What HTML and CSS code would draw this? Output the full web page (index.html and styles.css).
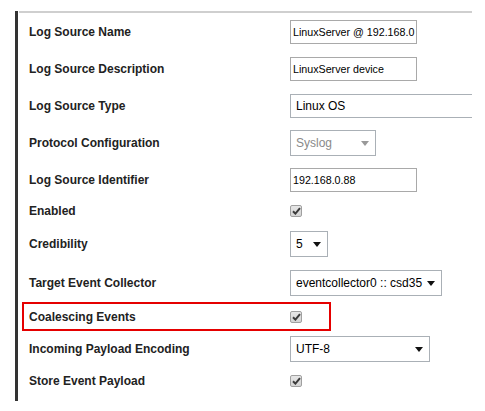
FILE: index.html
```html
<!DOCTYPE html>
<html>
<head>
<meta charset="utf-8">
<link rel="stylesheet" href="styles.css">
</head>
<body>
<div class="panel">
  <div class="content">
    <div class="row r37">
      <div class="label">Log Source Name</div>
      <div class="field text w127">LinuxServer @ 192.168.0</div>
    </div>
    <div class="row r37">
      <div class="label">Log Source Description</div>
      <div class="field text w127">LinuxServer device</div>
    </div>
    <div class="row r37">
      <div class="label">Log Source Type</div>
      <div class="field sel wide">Linux OS</div>
    </div>
    <div class="row r37">
      <div class="label">Protocol Configuration</div>
      <div class="field sel disabled w86">Syslog<span class="arrow"></span></div>
    </div>
    <div class="row r37">
      <div class="label">Log Source Identifier</div>
      <div class="field text w127">192.168.0.88</div>
    </div>
    <div class="row r26">
      <div class="label">Enabled</div>
      <span class="check"><svg width="9" height="8" viewBox="0 0 9 8"><path d="M1 4.2 L3.4 6.6 L8 1.2" fill="none" stroke="#3a3a3a" stroke-width="2"/></svg></span>
    </div>
    <div class="row r40">
      <div class="label">Credibility</div>
      <div class="field sel w38">5<span class="arrow"></span></div>
    </div>
    <div class="row r38">
      <div class="label">Target Event Collector</div>
      <div class="field sel w152">eventcollector0 :: csd35<span class="arrow"></span></div>
    </div>
    <div class="row r29 highlight">
      <div class="label">Coalescing Events</div>
      <span class="check"><svg width="9" height="8" viewBox="0 0 9 8"><path d="M1 4.2 L3.4 6.6 L8 1.2" fill="none" stroke="#3a3a3a" stroke-width="2"/></svg></span>
    </div>
    <div class="row r36">
      <div class="label">Incoming Payload Encoding</div>
      <div class="field sel w140">UTF-8<span class="arrow"></span></div>
    </div>
    <div class="row r28">
      <div class="label">Store Event Payload</div>
      <span class="check"><svg width="9" height="8" viewBox="0 0 9 8"><path d="M1 4.2 L3.4 6.6 L8 1.2" fill="none" stroke="#3a3a3a" stroke-width="2"/></svg></span>
    </div>
  </div>
</div>
</body>
</html>
```

FILE: styles.css
```css
html, body {
  margin: 0;
  padding: 0;
  background: #fff;
}
body {
  font-family: "Liberation Sans", Arial, sans-serif;
  color: #222;
}
.panel {
  margin: 11px 0 0 15px;
  width: 457px;
  height: 390px;
  box-sizing: border-box;
  border-left: 3px solid #333;
  overflow: hidden;
}
.content {
  margin-left: 1px;
  border-top: 2px solid #cfcfcf;
  height: 100%;
}
.row {
  display: flex;
  align-items: center;
  margin-left: 3px;
  padding-left: 7px;
  box-sizing: border-box;
}
.r26 { height: 26px; }
.r28 { height: 28px; }
.r29 { height: 29px; }
.r36 { height: 36px; }
.r37 { height: 37px; }
.r38 { height: 38px; }
.r40 { height: 40px; }
.highlight {
  width: 309px;
  border: 2px solid #e50000;
  padding-left: 5px;
}
.label {
  width: 261px;
  flex: none;
  font-size: 12px;
  font-weight: bold;
  color: #222;
}
.field {
  flex: none;
  box-sizing: border-box;
  border: 1px solid #a9a9a9;
  background: #fff;
  color: #000;
  white-space: nowrap;
  overflow: hidden;
  position: relative;
  display: flex;
  align-items: center;
}
.text {
  height: 24px;
  font-size: 10.7px;
  padding-left: 2px;
}
.sel {
  height: 26px;
  font-size: 12px;
  padding-left: 5px;
  border-color: #aab0b6;
}
.wide {
  width: 200px;
  height: 24px;
}
.w127 { width: 127px; }
.w86 { width: 86px; }
.w38 { width: 38px; }
.w152 { width: 152px; }
.w140 { width: 140px; }
.disabled {
  color: #8a8a8a;
}
.arrow {
  position: absolute;
  right: 6px;
  top: 50%;
  margin-top: -2px;
  width: 0;
  height: 0;
  border-left: 4px solid transparent;
  border-right: 4px solid transparent;
  border-top: 5px solid #111;
}
.disabled .arrow {
  border-top-color: #999;
}
.check {
  flex: none;
  width: 12px;
  height: 12px;
  box-sizing: border-box;
  border: 1px solid #a0a0a0;
  border-radius: 2px;
  background: linear-gradient(#e6e6e6, #d4d4d4);
  display: flex;
  align-items: center;
  justify-content: center;
}
.check svg {
  display: block;
}
```
